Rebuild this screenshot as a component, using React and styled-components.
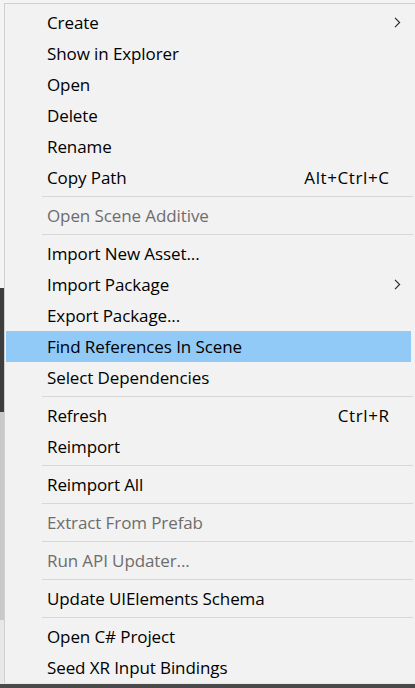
import React from "react";
import styled, { createGlobalStyle } from "styled-components";

const Global = createGlobalStyle`
  html, body {
    margin: 0;
    padding: 0;
    overflow: hidden;
  }
  body {
    width: 415px;
    height: 688px;
    background:
      linear-gradient(to bottom,
        #f4f4f4 0px, #f4f4f4 288px,
        #3d3d3d 288px, #3d3d3d 412px,
        #c9c9c9 412px, #c9c9c9 620px,
        #e8e8e8 620px, #e8e8e8 684px,
        #4a4a4a 684px);
    font-family: "Open Sans", "Noto Sans", "Liberation Sans", sans-serif;
  }
`;

const Menu = styled.div`
  box-sizing: border-box;
  margin: 3px 0 0 4px;
  width: 411px;
  padding: 3px 0 0 0;
  background: #f2f2f2;
  border: 1px solid #cfcfcf;
  border-right: none;
  border-bottom: none;
`;

const Row = styled.div`
  display: grid;
  grid-template-columns: 1fr auto 22px;
  align-items: center;
  height: 31px;
  margin: 0 4px 0 1px;
  padding-left: 41px;
  background: ${(p) => (p.$active ? "#91c9f7" : "transparent")};
  color: ${(p) => (p.$disabled ? "#6d6d6d" : "#000")};
  font-size: 17px;
  line-height: 31px;
  white-space: nowrap;
`;

const Label = styled.span`
  letter-spacing: -0.1px;
`;

const Shortcut = styled.span`
  letter-spacing: 0.6px;
  margin-right: -0.6px;
`;

const ArrowCell = styled.span`
  display: flex;
  align-items: center;
  padding-left: 5px;
`;

const Separator = styled.div`
  height: 7px;
  display: flex;
  align-items: center;
  margin: 0 2px 0 37px;

  &::after {
    content: "";
    flex: 1;
    height: 1px;
    background: #d7d7d7;
  }
`;

const Chevron = () => (
  <svg width="7" height="11" viewBox="0 0 7 11">
    <path d="M1 0.8 L5.6 5.5 L1 10.2" fill="none" stroke="#2b2b2b" strokeWidth="1.2" />
  </svg>
);

const groups = [
  [
    { label: "Create", sub: true },
    { label: "Show in Explorer" },
    { label: "Open" },
    { label: "Delete" },
    { label: "Rename" },
    { label: "Copy Path", shortcut: "Alt+Ctrl+C" },
  ],
  [{ label: "Open Scene Additive", disabled: true }],
  [
    { label: "Import New Asset..." },
    { label: "Import Package", sub: true },
    { label: "Export Package..." },
    { label: "Find References In Scene", active: true },
    { label: "Select Dependencies" },
  ],
  [
    { label: "Refresh", shortcut: "Ctrl+R" },
    { label: "Reimport" },
  ],
  [{ label: "Reimport All" }],
  [{ label: "Extract From Prefab", disabled: true }],
  [{ label: "Run API Updater...", disabled: true }],
  [{ label: "Update UIElements Schema" }],
  [{ label: "Open C# Project" }, { label: "Seed XR Input Bindings" }],
];

export default function App() {
  return (
    <>
      <Global />
      <Menu>
        {groups.map((items, gi) => (
          <React.Fragment key={gi}>
            {gi > 0 && <Separator />}
            {items.map((it) => (
              <Row key={it.label} $active={it.active} $disabled={it.disabled}>
                <Label>{it.label}</Label>
                <Shortcut>{it.shortcut || ""}</Shortcut>
                <ArrowCell>{it.sub ? <Chevron /> : null}</ArrowCell>
              </Row>
            ))}
          </React.Fragment>
        ))}
      </Menu>
    </>
  );
}
